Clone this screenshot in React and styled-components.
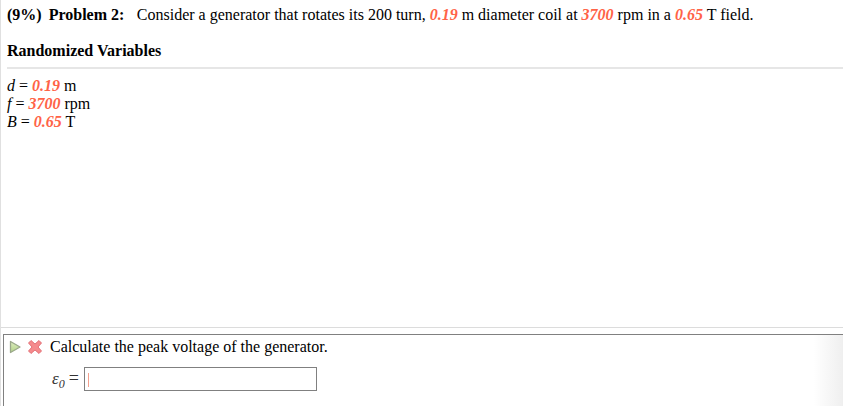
import React from 'react'
import styled, { createGlobalStyle } from 'styled-components'

const GlobalStyle = createGlobalStyle`
  html, body {
    margin: 0;
    padding: 0;
    background: #fff;
  }
  body {
    font-family: "Liberation Serif", "Times New Roman", serif;
    font-size: 16px;
    color: #000;
  }
`

const Page = styled.div`
  width: 843px;
  height: 406px;
  box-sizing: border-box;
  border-left: 1px solid #e0e0e0;
  display: flex;
  flex-direction: column;
  overflow: hidden;
`

const ProblemArea = styled.section`
  height: 328px;
  box-sizing: border-box;
  padding: 5px 0 0 6px;
  border-bottom: 1px solid #dcdcdc;
  margin-bottom: 6px;
`

const Statement = styled.div`
  display: flex;
  height: 19px;
  line-height: 19px;
`

const Score = styled.b`
  margin-right: 7px;
`

const Label = styled.b`
  margin-right: 12.5px;
`

const Value = styled.i`
  color: #ff6347;
  font-weight: bold;
`

const SectionTitle = styled.h3`
  margin: 17px 0 0;
  font-size: 16px;
  line-height: 19px;
  height: 26px;
  border-bottom: 2px solid #e6e6e6;
`

const Variables = styled.div`
  margin-top: 8px;
`

const VariableRow = styled.div`
  line-height: 18px;
  height: 18px;
`

const AnswerPanel = styled.section`
  flex: 1;
  margin-left: 2px;
  border-left: 1px solid #808080;
  border-top: 1px solid #808080;
  background: linear-gradient(to right, #fff 96.5%, #efefef 100%);
`

const QuestionRow = styled.div`
  display: flex;
  align-items: center;
  height: 20px;
  margin-top: 2px;
  padding-left: 4px;
`

const IconSlot = styled.svg`
  width: 16px;
  height: 16px;
  margin-right: ${p => p.$gap}px;
  flex: none;
`

const AnswerRow = styled.div`
  display: flex;
  align-items: center;
  margin-top: 10px;
  padding-left: 48px;
`

const Symbol = styled.i`
  font-size: 17px;
  color: #333;
  margin-right: 4px;
  white-space: nowrap;

  sub {
    font-size: 12px;
    line-height: 0;
  }
`

const Equals = styled.span`
  margin: 0 5px 2px 0;
  color: #333;
  font-size: 18px;
`

const AnswerBox = styled.div`
  width: 233px;
  height: 24px;
  box-sizing: border-box;
  border: 1px solid #808080;
  padding: 5px 0 0 3px;
`

const Caret = styled.div`
  width: 1px;
  height: 14px;
  background: #f4a08e;
`

const HintIcon = () => (
  <IconSlot $gap={3} viewBox="0 0 16 16">
    <defs>
      <linearGradient id="hintFill" x1="0" y1="0" x2="0" y2="1">
        <stop offset="0" stopColor="#dcebbf" />
        <stop offset="1" stopColor="#b4d488" />
      </linearGradient>
    </defs>
    <path d="M2.5 2.5 L12 8 L2.5 13.5 Z" fill="url(#hintFill)" stroke="#9aa88a" strokeWidth="1.3" strokeLinejoin="round" />
  </IconSlot>
)

const WrongIcon = () => (
  <IconSlot $gap={7} viewBox="0 0 16 16">
    <path
      d="M1.5 4 L4 1.5 L8 5 L12 1.5 L14.5 4 L11 8 L14.5 12 L12 14.5 L8 11 L4 14.5 L1.5 12 L5 8 Z"
      fill="#f58a8c"
      stroke="#e06a70"
      strokeWidth="0.9"
      strokeLinejoin="round"
    />
  </IconSlot>
)

const App = () => (
  <Page>
    <GlobalStyle />
    <ProblemArea>
      <Statement>
        <Score>(9%)</Score>
        <Label>Problem 2:</Label>
        <span>
          Consider a generator that rotates its 200 turn, <Value>0.19</Value> m diameter coil at{' '}
          <Value>3700</Value> rpm in a <Value>0.65</Value> T field.
        </span>
      </Statement>
      <SectionTitle>Randomized Variables</SectionTitle>
      <Variables>
        <VariableRow><i>d</i> = <Value>0.19</Value> m</VariableRow>
        <VariableRow><i>f</i> = <Value>3700</Value> rpm</VariableRow>
        <VariableRow><i>B</i> = <Value>0.65</Value> T</VariableRow>
      </Variables>
    </ProblemArea>
    <AnswerPanel>
      <QuestionRow>
        <HintIcon />
        <WrongIcon />
        <span>Calculate the peak voltage of the generator.</span>
      </QuestionRow>
      <AnswerRow>
        <Symbol>ε<sub>0</sub></Symbol>
        <Equals>=</Equals>
        <AnswerBox><Caret /></AnswerBox>
      </AnswerRow>
    </AnswerPanel>
  </Page>
)

export default App
